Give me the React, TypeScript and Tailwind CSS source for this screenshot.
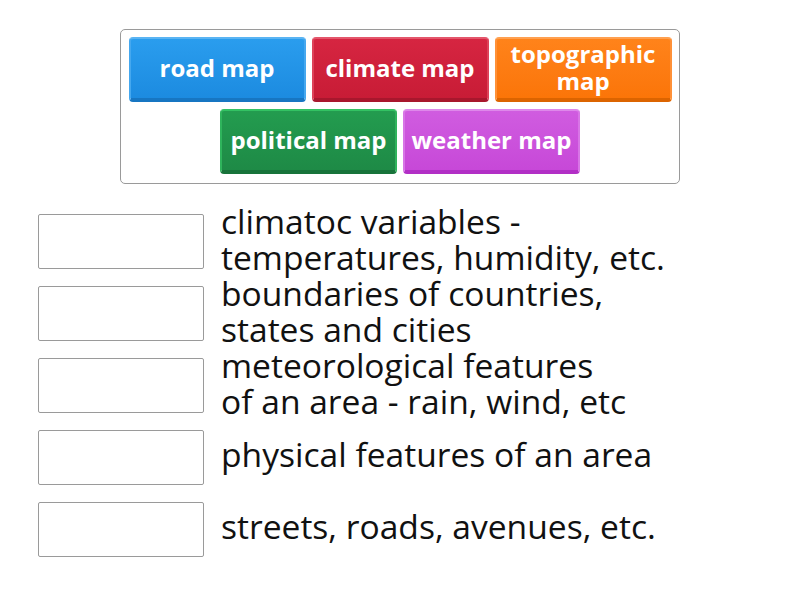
const tiles = [
  { label: "road map", cls: "bg-gradient-to-b from-[#2a9dee] to-[#1c8be0] border-t-[#5ab4f3] border-x-[#45a8ef] border-b-[#1776c2]" },
  { label: "climate map", cls: "bg-gradient-to-b from-[#d62541] to-[#c81c36] border-t-[#e4566b] border-x-[#de4259] border-b-[#a8172d]" },
  { label: "topographic map", cls: "bg-gradient-to-b from-[#ff831a] to-[#fb7508] border-t-[#ffa050] border-x-[#ff9138] border-b-[#dc6400]" },
  { label: "political map", cls: "bg-gradient-to-b from-[#239c4f] to-[#1e8a46] border-t-[#33c263] border-x-[#2fb45c] border-b-[#18733a]" },
  { label: "weather map", cls: "bg-gradient-to-b from-[#d05ce0] to-[#c748d8] border-t-[#de88ea] border-x-[#d875e6] border-b-[#b22fc6]" },
];

const rows = [
  ["climatoc variables -", "temperatures, humidity, etc."],
  ["boundaries of countries,", "states and cities"],
  ["meteorological features", "of an area - rain, wind, etc"],
  ["physical features of an area"],
  ["streets, roads, avenues, etc."],
];

export default function App() {
  return (
    <div className="w-[800px] h-[600px] bg-white" style={{ fontFamily: '"Open Sans", sans-serif' }}>
      <div className="pt-[29px] flex justify-center">
        <div className="w-[560px] h-[155px] border border-[#9a9a9a] rounded-[5px] px-[7px] pt-[7px] flex flex-wrap justify-center content-start gap-x-[6px] gap-y-[7px]">
          {tiles.map((t) => (
            <div
              key={t.label}
              className={`w-[177px] h-[65px] rounded-[4px] border-x-2 border-t-2 border-b-4 pb-[3px] flex items-center justify-center text-center text-white font-bold text-[24px] leading-[27px] px-1 ${t.cls}`}
            >
              {t.label}
            </div>
          ))}
        </div>
      </div>

      <div className="mt-[30px] pl-[38px] flex flex-col gap-[17px]">
        {rows.map((lines, i) => (
          <div key={i} className="flex items-center h-[55px] gap-[17px]">
            <div className="w-[166px] h-[55px] shrink-0 border border-[#9a9a9a] rounded-[2px] bg-white" />
            <div className={`text-[33.6px] leading-[36.5px] text-[#111] whitespace-nowrap ${lines.length > 1 ? "mb-[5px]" : "mb-[7px]"}`}>
              {lines.map((l) => (
                <div key={l}>{l}</div>
              ))}
            </div>
          </div>
        ))}
      </div>
    </div>
  );
}
